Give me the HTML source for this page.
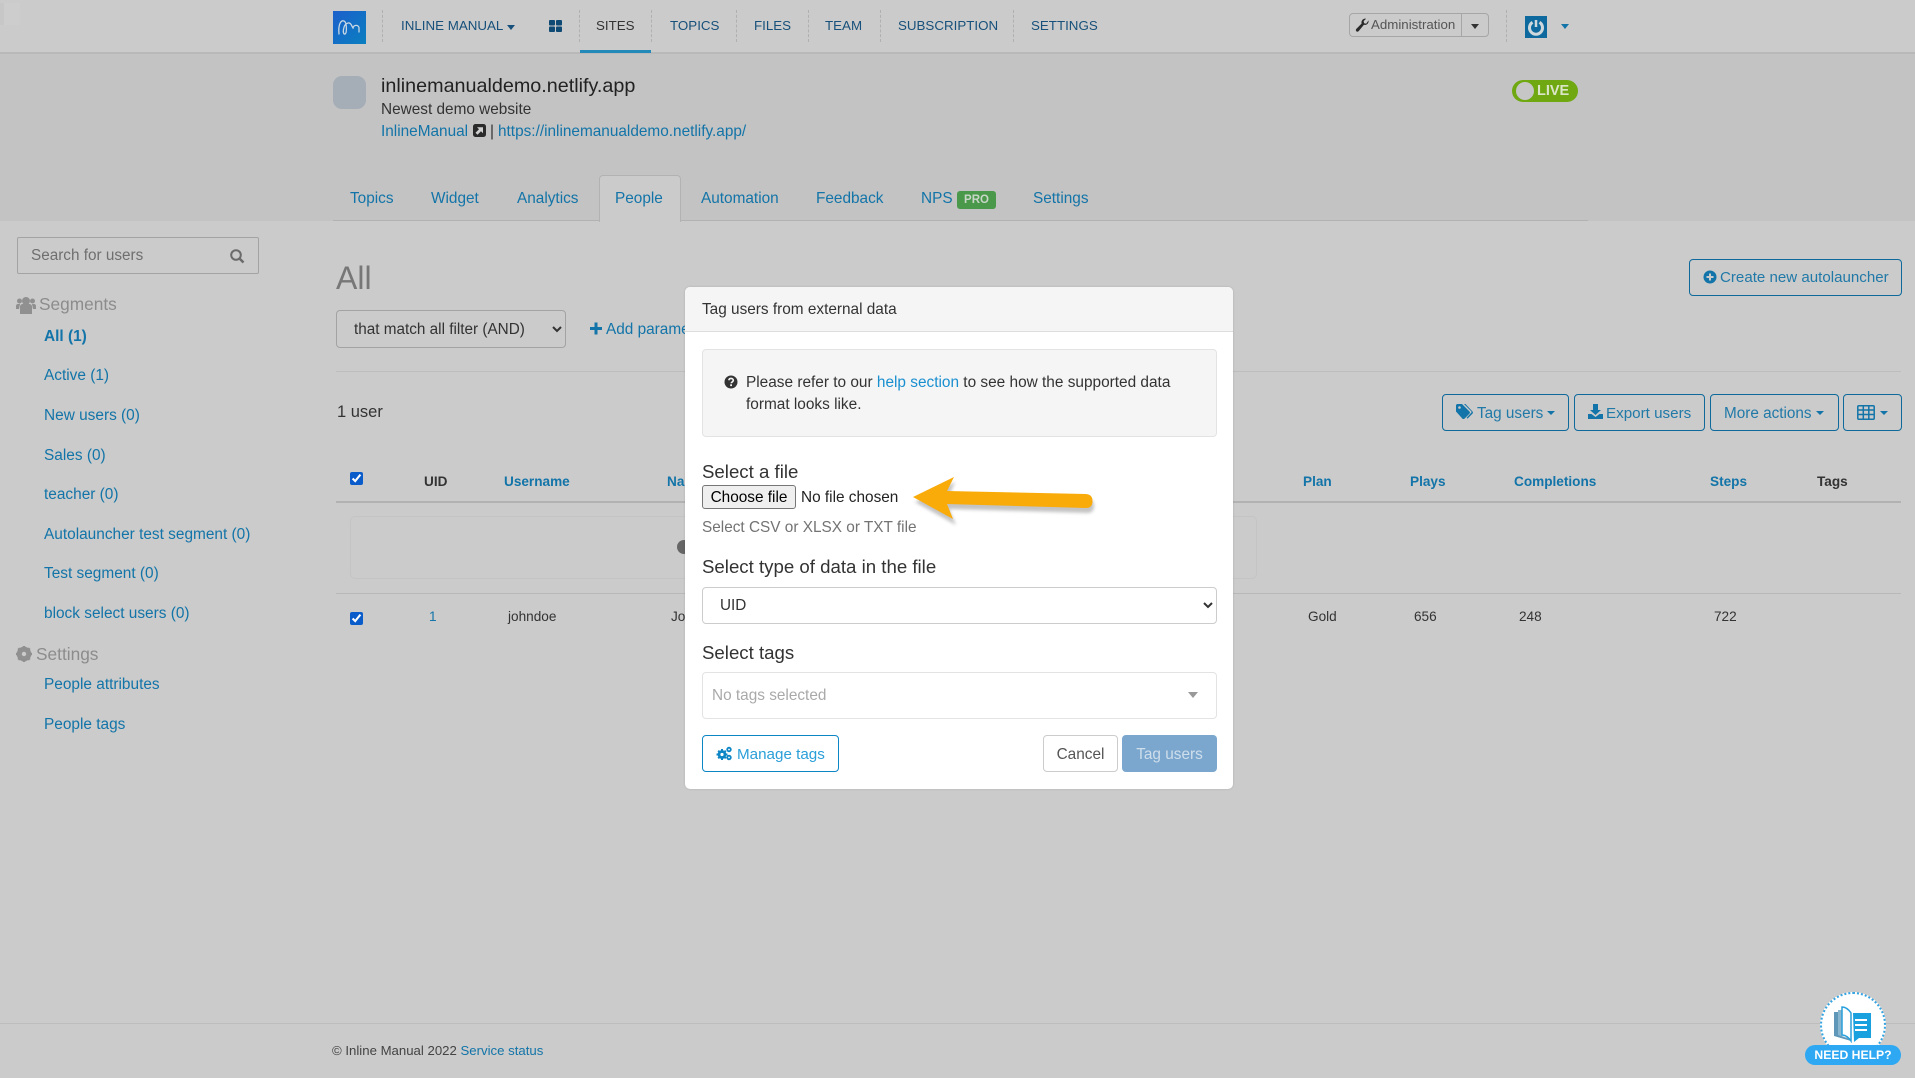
<!DOCTYPE html>
<html><head><meta charset="utf-8"><style>
*{box-sizing:border-box}
html,body{margin:0;padding:0}
body{position:relative;width:1915px;height:1078px;overflow:hidden;background:#cbcbcb;font-family:"Liberation Sans",sans-serif;font-size:15.36px;color:#333}
.a{position:absolute}
.t{position:absolute;white-space:nowrap;line-height:20px}
.l{color:#1274a8}
.n{font-size:13.35px;color:#17507a}
.sep{position:absolute;top:10px;height:32px;border-left:1px dashed #b0b0b0}
.btn{position:absolute;border:1px solid #0f6a9b;border-radius:4px;height:37px;color:#2179a8}
.th{font-weight:bold;font-size:13.6px;color:#1274a8}
.td{font-size:13.6px;color:#333}
.side{color:#1274a8;font-size:15.42px}
input[type=checkbox]{position:absolute;margin:0;width:13px;height:13px;accent-color:#0b5ccb}
select{font-family:"Liberation Sans",sans-serif;font-size:15.3px;position:absolute;border-radius:4px}
</style></head><body>

<!-- corner artefact -->
<div class="a" style="left:0;top:3px;width:20px;height:22px;background:#cdcdcd"></div>
<div class="a" style="left:0;top:3px;width:4px;height:22px;background:#c7c7c7"></div>

<!-- top nav -->
<div class="a" style="left:0;top:52px;width:1915px;height:2px;background:#b9b9b9"></div>
<div class="a" style="left:333px;top:11px;width:33px;height:33px;background:linear-gradient(135deg,#1c5fcb,#0a7fc0)">
<svg width="33" height="33" viewBox="0 0 33 33" fill="none" stroke="#c8d8e4" stroke-width="1.3" stroke-linecap="round"><path d="M6 23C5 13 8 9 11 10c3 1 3 12 1 13-3 1-2-10 3-11 3-1 4 4 5 5 1-4 6-3 6 0v4"/></svg></div>
<div class="sep" style="left:382px"></div>
<div class="sep" style="left:579px"></div>
<div class="sep" style="left:651px"></div>
<div class="sep" style="left:736px"></div>
<div class="sep" style="left:808px"></div>
<div class="sep" style="left:880px"></div>
<div class="sep" style="left:1013px"></div>
<div class="a" style="left:580px;top:50px;width:71px;height:3px;background:#2389b9"></div>
<div class="t n" style="left:401px;top:16px">INLINE MANUAL</div>
<div class="a" style="left:507px;top:25px;border:4.5px solid transparent;border-top:5px solid #17507a;border-bottom:0"></div>
<svg class="a" style="left:549px;top:20px" width="13" height="12" viewBox="0 0 13 12" fill="#0f4a75"><rect width="6" height="5.5" rx="1"/><rect x="7" width="6" height="5.5" rx="1"/><rect y="6.5" width="6" height="5.5" rx="1"/><rect x="7" y="6.5" width="6" height="5.5" rx="1"/></svg>
<div class="t n" style="left:596px;top:16px;color:#333">SITES</div>
<div class="t n" style="left:670px;top:16px">TOPICS</div>
<div class="t n" style="left:754px;top:16px">FILES</div>
<div class="t n" style="left:825px;top:16px">TEAM</div>
<div class="t n" style="left:898px;top:16px">SUBSCRIPTION</div>
<div class="t n" style="left:1031px;top:16px">SETTINGS</div>

<div class="a" style="left:1349px;top:13px;width:140px;height:24px;border:1px solid #a6a6a6;border-radius:4px"></div>
<div class="a" style="left:1461px;top:13px;width:1px;height:24px;background:#a6a6a6"></div>
<svg class="a" style="left:1355px;top:17px" width="14" height="15" viewBox="0 0 13 14" fill="#2a2a2a"><path d="M12.6 3.2c.3 1.8-.6 3.500-2.200 4-.8.3-1.500.2-2.100 0L3.400 13.200c-.6.7-1.600.7-2.200.1s-.6-1.500 0-2.200l5-5c-.3-.8-.3-1.600 0-2.300C6.900 2.100 8.700 1.200 10.300 1.600L8 3.900l.5 1.900 1.900.5z"/></svg>
<div class="t" style="left:1371px;top:15px;font-size:13.3px;color:#555">Administration</div>
<div class="a" style="left:1471px;top:24px;border:4.5px solid transparent;border-top:5px solid #333;border-bottom:0"></div>
<div class="sep" style="left:1506px"></div>
<div class="a" style="left:1525px;top:16px;width:22px;height:22px;background:#0e6a9e">
<svg width="22" height="22" viewBox="0 0 22 22" fill="none" stroke="#cfd8dd" stroke-width="3"><path d="M7.500 6.300a6.500 6.500 0 1 0 7 0"/><path d="M11 4v7" stroke-width="2.500"/></svg></div>
<div class="a" style="left:1561px;top:24px;border:4.5px solid transparent;border-top:5px solid #1274a8;border-bottom:0"></div>

<!-- site header band -->
<div class="a" style="left:0;top:54px;width:1915px;height:167px;background:#c3c3c3"></div>
<div class="a" style="left:333px;top:76px;width:33px;height:33px;border-radius:9px;background:#a5adb7"></div>
<div class="t" style="left:381px;top:76px;font-size:19.75px;color:#222">inlinemanualdemo.netlify.app</div>
<div class="t" style="left:381px;top:100px;color:#333">Newest demo website</div>
<div class="t l" style="left:381px;top:122px">InlineManual</div>
<svg class="a" style="left:473px;top:124px" width="13" height="13" viewBox="0 0 13 13"><rect width="13" height="13" rx="2.500" fill="#2a2a2a"/><path d="M4 3.200h6v6L8 7.200 4.500 10.700 2.500 8.700 6 5.200z" fill="#d0d0d0"/></svg>
<div class="t" style="left:490px;top:122px">|</div>
<div class="t l" style="left:498px;top:122px">https://inlinemanualdemo.netlify.app/</div>
<div class="a" style="left:1512px;top:80px;width:66px;height:22px;border-radius:11px;background:#6fa810"></div>
<div class="a" style="left:1516px;top:82px;width:18px;height:18px;border-radius:50%;background:#c6c6c6"></div>
<div class="t" style="left:1537px;top:81px;font-size:14.5px;font-weight:bold;color:#dbe5c8">LIVE</div>

<!-- tabs -->
<div class="a" style="left:333px;top:220px;width:1255px;height:1px;background:#b2b2b2"></div>
<div class="a" style="left:599px;top:175px;width:82px;height:47px;background:#cbcbcb;border:1px solid #b2b2b2;border-bottom:0;border-radius:4px 4px 0 0"></div>
<div class="t l" style="left:350px;top:189px">Topics</div>
<div class="t l" style="left:431px;top:189px">Widget</div>
<div class="t l" style="left:517px;top:189px">Analytics</div>
<div class="t l" style="left:615px;top:189px">People</div>
<div class="t l" style="left:701px;top:189px">Automation</div>
<div class="t l" style="left:816px;top:189px">Feedback</div>
<div class="t l" style="left:921px;top:189px">NPS</div>
<div class="a" style="left:957px;top:191px;width:39px;height:18px;border-radius:3px;background:#4a984a;color:#c8d6c8;font-size:11.5px;font-weight:bold;text-align:center;line-height:18px">PRO</div>
<div class="t l" style="left:1033px;top:189px">Settings</div>

<!-- sidebar -->
<div class="a" style="left:17px;top:237px;width:242px;height:37px;border:1px solid #a3a3a3;border-radius:2px"></div>
<div class="t" style="left:31px;top:246px;color:#6f6f6f;font-size:15.3px">Search for users</div>
<svg class="a" style="left:229px;top:248px" width="16" height="16" viewBox="0 0 16 16" fill="none" stroke="#6b6b6b" stroke-width="2"><circle cx="7" cy="7" r="4.800"/><path d="M10.500 10.500l4 4" stroke-width="2.500"/></svg>
<svg class="a" style="left:16px;top:296px" width="20" height="18" viewBox="0 0 20 18" fill="#909090"><circle cx="10" cy="5" r="4"/><circle cx="3.500" cy="5" r="2.500"/><circle cx="16.500" cy="5" r="2.500"/><path d="M4 18V11c0-2 1-3 3-3h6c2 0 3 1 3 3v7z"/><path d="M0 13V10c0-1 .7-2 2-2h2L3 13zM20 13V10c0-1-.7-2-2-2h-2l1 5z"/></svg>
<div class="t" style="left:39px;top:294px;font-size:17.3px;color:#8c8c8c">Segments</div>
<div class="t side" style="left:44px;top:327px;font-weight:bold">All (1)</div>
<div class="t side" style="left:44px;top:366px">Active (1)</div>
<div class="t side" style="left:44px;top:406px">New users (0)</div>
<div class="t side" style="left:44px;top:446px">Sales (0)</div>
<div class="t side" style="left:44px;top:485px">teacher (0)</div>
<div class="t side" style="left:44px;top:525px">Autolauncher test segment (0)</div>
<div class="t side" style="left:44px;top:564px">Test segment (0)</div>
<div class="t side" style="left:44px;top:604px">block select users (0)</div>
<svg class="a" style="left:16px;top:646px" width="16" height="16" viewBox="0 0 16 16"><circle cx="8" cy="8" r="5.500" fill="none" stroke="#909090" stroke-width="3.500"/><path d="M8 0v16M0 8h16M2.300 2.300l11.400 11.400M13.700 2.300L2.300 13.700" stroke="#909090" stroke-width="2.500"/><circle cx="8" cy="8" r="2.200" fill="#cbcbcb"/></svg>
<div class="t" style="left:36px;top:644px;font-size:17.3px;color:#8c8c8c">Settings</div>
<div class="t side" style="left:44px;top:675px">People attributes</div>
<div class="t side" style="left:44px;top:715px">People tags</div>

<!-- main -->
<div class="t" style="left:336px;top:262px;font-size:32px;line-height:32px;color:#777">All</div>
<select style="left:336px;top:310px;width:230px;height:38px;background:#cbcbcb;border:1px solid #a3a3a3;color:#333;padding-left:13px"><option>that match all filter (AND)</option></select>
<svg class="a" style="left:590px;top:322px" width="12" height="13" viewBox="0 0 12 13"><path d="M6 .5v12M0 6.500h12" stroke="#1274a8" stroke-width="3"/></svg>
<div class="t l" style="left:606px;top:320px">Add parameter</div>
<div class="a" style="left:336px;top:371px;width:1565px;height:1px;background:#bdbdbd"></div>
<div class="t" style="left:337px;top:402px;font-size:16.5px;color:#333">1 user</div>

<div class="btn" style="left:1689px;top:259px;width:213px"></div>
<svg class="a" style="left:1703px;top:270px" width="14" height="14" viewBox="0 0 14 14"><circle cx="7" cy="7" r="6.500" fill="#1274a8"/><path d="M7 3.500v7M3.500 7h7" stroke="#cbcbcb" stroke-width="2"/></svg>
<div class="t" style="left:1720px;top:268px;font-size:15.1px;color:#2179a8">Create new autolauncher</div>

<div class="btn" style="left:1442px;top:394px;width:127px"></div>
<svg class="a" style="left:1456px;top:404px" width="17" height="16" viewBox="0 0 17 16" fill="#1274a8"><path d="M0 1.500C0 .7.700 0 1.500 0H6l7.500 7.500c.6.600.6 1.500 0 2.100l-5 5c-.6.600-1.500.6-2.100 0L0 7.500z"/><path d="M8 0h1.500l7 7.500c.6.600.6 1.500 0 2.100l-5 5-.9-.9 4.600-5c.5-.5.500-1 0-1.500z"/><circle cx="3.500" cy="3.500" r="1.300" fill="#cbcbcb"/></svg>
<div class="t" style="left:1477px;top:404px;font-size:15.3px;color:#2179a8">Tag users</div>
<div class="a" style="left:1547px;top:411px;border:4px solid transparent;border-top:4.500px solid #1274a8;border-bottom:0"></div>

<div class="btn" style="left:1574px;top:394px;width:131px"></div>
<svg class="a" style="left:1588px;top:404px" width="15" height="15" viewBox="0 0 15 15" fill="#1274a8"><path d="M5 0h5v6h3L7.500 11 2 6h3z"/><path d="M0 10h3.500l4 3 4-3H15v5H0z"/></svg>
<div class="t" style="left:1606px;top:404px;font-size:15.2px;color:#2179a8">Export users</div>

<div class="btn" style="left:1710px;top:394px;width:129px"></div>
<div class="t" style="left:1724px;top:404px;font-size:15.3px;color:#2179a8">More actions</div>
<div class="a" style="left:1816px;top:411px;border:4px solid transparent;border-top:4.500px solid #1274a8;border-bottom:0"></div>

<div class="btn" style="left:1843px;top:394px;width:59px"></div>
<svg class="a" style="left:1857px;top:405px" width="18" height="15" viewBox="0 0 18 15" fill="none" stroke="#1274a8" stroke-width="1.500"><rect x=".8" y=".8" width="16.400" height="13.400" rx="1"/><path d="M.8 5h16.400M.8 9.500h16.400M6.300.8v13.400M11.800.8v13.400"/></svg>
<div class="a" style="left:1880px;top:411px;border:4px solid transparent;border-top:4.500px solid #1274a8;border-bottom:0"></div>

<!-- table -->
<input type="checkbox" checked style="left:350px;top:472px">
<div class="t th" style="left:424px;top:472px;color:#333">UID</div>
<div class="t th" style="left:504px;top:472px">Username</div>
<div class="t th" style="left:667px;top:472px">Name</div>
<div class="t th" style="left:1303px;top:472px">Plan</div>
<div class="t th" style="left:1410px;top:472px">Plays</div>
<div class="t th" style="left:1514px;top:472px">Completions</div>
<div class="t th" style="left:1710px;top:472px">Steps</div>
<div class="t th" style="left:1817px;top:472px;color:#333">Tags</div>
<div class="a" style="left:336px;top:501px;width:1565px;height:2px;background:#b2b2b2"></div>
<div class="a" style="left:350px;top:516px;width:907px;height:63px;border:1px solid #c4c4c4;border-radius:5px"></div>
<div class="a" style="left:677px;top:540px;width:14px;height:14px;border-radius:50%;background:#666"></div>
<div class="a" style="left:336px;top:593px;width:1565px;height:1px;background:#b8b8b8"></div>
<input type="checkbox" checked style="left:350px;top:612px">
<div class="t td" style="left:429px;top:607px;color:#1274a8">1</div>
<div class="t td" style="left:508px;top:607px">johndoe</div>
<div class="t td" style="left:671px;top:607px">John</div>
<div class="t td" style="left:1308px;top:607px">Gold</div>
<div class="t td" style="left:1414px;top:607px">656</div>
<div class="t td" style="left:1519px;top:607px">248</div>
<div class="t td" style="left:1714px;top:607px">722</div>

<!-- footer -->
<div class="a" style="left:0;top:1023px;width:1915px;height:1px;background:#bdbdbd"></div>
<div class="t" style="left:332px;top:1041px;font-size:13.2px;color:#444">© Inline Manual 2022 <span class="l">Service status</span></div>

<!-- help widget -->
<div class="a" style="left:1820px;top:992px;width:66px;height:66px;border-radius:50%;background:#fff;border:2.500px dotted #34a4e2"></div>
<svg class="a" style="left:1833px;top:1006px" width="40" height="37" viewBox="0 0 40 37"><path d="M1 6h7v24l10 3v2L1 30z" fill="#5f97b9"/><path d="M5 4h4v26l9 4L5 29z" fill="#89b5cf"/><path d="M9 1c4 0 7 3 9 6v28c-2-3-5-6-9-6z" fill="#fff" stroke="#2aa0dc" stroke-width="1.500"/><path d="M20 7h18v25H26l-5 4z" fill="#19a1df"/><path d="M22 14h12M22 19h12M22 24h12" stroke="#fff" stroke-width="2"/></svg>
<div class="a" style="left:1805px;top:1045px;width:96px;height:20px;border-radius:10px;background:#2ea8f2;color:#fff;font-weight:bold;font-size:12.2px;line-height:20px;text-align:center;white-space:nowrap">NEED HELP?</div>

<!-- modal -->
<div class="a" style="left:685px;top:287px;width:548px;height:502px;background:#fff;border-radius:5px;box-shadow:0 0 2px rgba(0,0,0,.15)"></div>
<div class="a" style="left:685px;top:287px;width:548px;height:45px;background:#f5f5f5;border-bottom:1px solid #ddd;border-radius:5px 5px 0 0"></div>
<div class="t" style="left:702px;top:300px;color:#333">Tag users from external data</div>

<div class="a" style="left:702px;top:349px;width:515px;height:88px;background:#f5f5f5;border:1px solid #e3e3e3;border-radius:4px"></div>
<svg class="a" style="left:724px;top:375px" width="14" height="14" viewBox="0 0 14 14"><circle cx="7" cy="7" r="6.500" fill="#333"/><path d="M4.800 5.300C5 4 6 3.400 7 3.400c1.300 0 2.300.8 2.300 1.900 0 1.500-2 1.600-2 3" fill="none" stroke="#f5f5f5" stroke-width="1.600"/><rect x="6.200" y="9.300" width="1.800" height="1.800" fill="#f5f5f5"/></svg>
<div class="t" style="left:746px;top:373px;font-size:15.4px;color:#333">Please refer to our <span style="color:#1a8fd0">help section</span> to see how the supported data</div>
<div class="t" style="left:746px;top:395px;font-size:15.4px;color:#333">format looks like.</div>

<div class="t" style="left:702px;top:462px;font-size:18.65px;color:#333">Select a file</div>
<div class="a" style="left:702px;top:485px;width:94px;height:24px;background:#efefef;border:1px solid #767676;border-radius:3px;color:#000;text-align:center;line-height:24px;white-space:nowrap">Choose file</div>
<div class="t" style="left:801px;top:488px;color:#222">No file chosen</div>
<div class="t" style="left:702px;top:518px;color:#737373">Select CSV or XLSX or TXT file</div>

<svg class="a" style="left:905px;top:470px" width="200" height="60" viewBox="0 0 200 60">
<path d="M9 29L49 9 43 23 181 26Q188 26 188 33Q188 40 181 40L43 36 50 52z" fill="#555" opacity=".35" transform="translate(1 3)" style="filter:blur(1.5px)"/>
<path d="M8 27L49 7 42 21 181 24Q187.5 24.5 187.5 31Q187.5 38 181 38L42 34 48 49z" fill="#f9ab0a"/></svg>

<div class="t" style="left:702px;top:557px;font-size:18.65px;color:#333">Select type of data in the file</div>
<select style="left:702px;top:587px;width:515px;height:37px;background:#fff;border:1px solid #ccc;color:#333;padding-left:13px"><option>UID</option></select>
<div class="t" style="left:702px;top:643px;font-size:18.65px;color:#333">Select tags</div>
<div class="a" style="left:702px;top:672px;width:515px;height:47px;border:1px solid #e3e3e3;border-radius:4px"></div>
<div class="t" style="left:712px;top:686px;color:#a9a9a9">No tags selected</div>
<div class="a" style="left:1188px;top:692px;border:5.5px solid transparent;border-top:6px solid #999;border-bottom:0"></div>

<div class="a" style="left:702px;top:735px;width:137px;height:37px;border:1px solid #0d86c6;border-radius:4px"></div>
<svg class="a" style="left:716px;top:746px" width="16" height="15" viewBox="0 0 16 15"><g fill="none" stroke="#0d86c6"><circle cx="6" cy="8.500" r="3" stroke-width="2.800"/><path d="M6 3v11M.5 8.500h11M2.200 4.700l7.600 7.600M9.800 4.700l-7.600 7.600" stroke-width="2" stroke-dasharray="2 7"/><circle cx="13" cy="3.500" r="1.800" stroke-width="1.800"/><circle cx="13" cy="11.500" r="1.800" stroke-width="1.800"/></g></svg>
<div class="t" style="left:737px;top:745px;font-size:15.2px;color:#2a9fd8">Manage tags</div>
<div class="a" style="left:1043px;top:735px;width:75px;height:37px;border:1px solid #ccc;border-radius:4px;text-align:center;line-height:37px;color:#555">Cancel</div>
<div class="a" style="left:1122px;top:735px;width:95px;height:37px;background:#7ba7cf;border-radius:4px;text-align:center;line-height:39px;color:#cfdeeb">Tag users</div>

</body></html>
